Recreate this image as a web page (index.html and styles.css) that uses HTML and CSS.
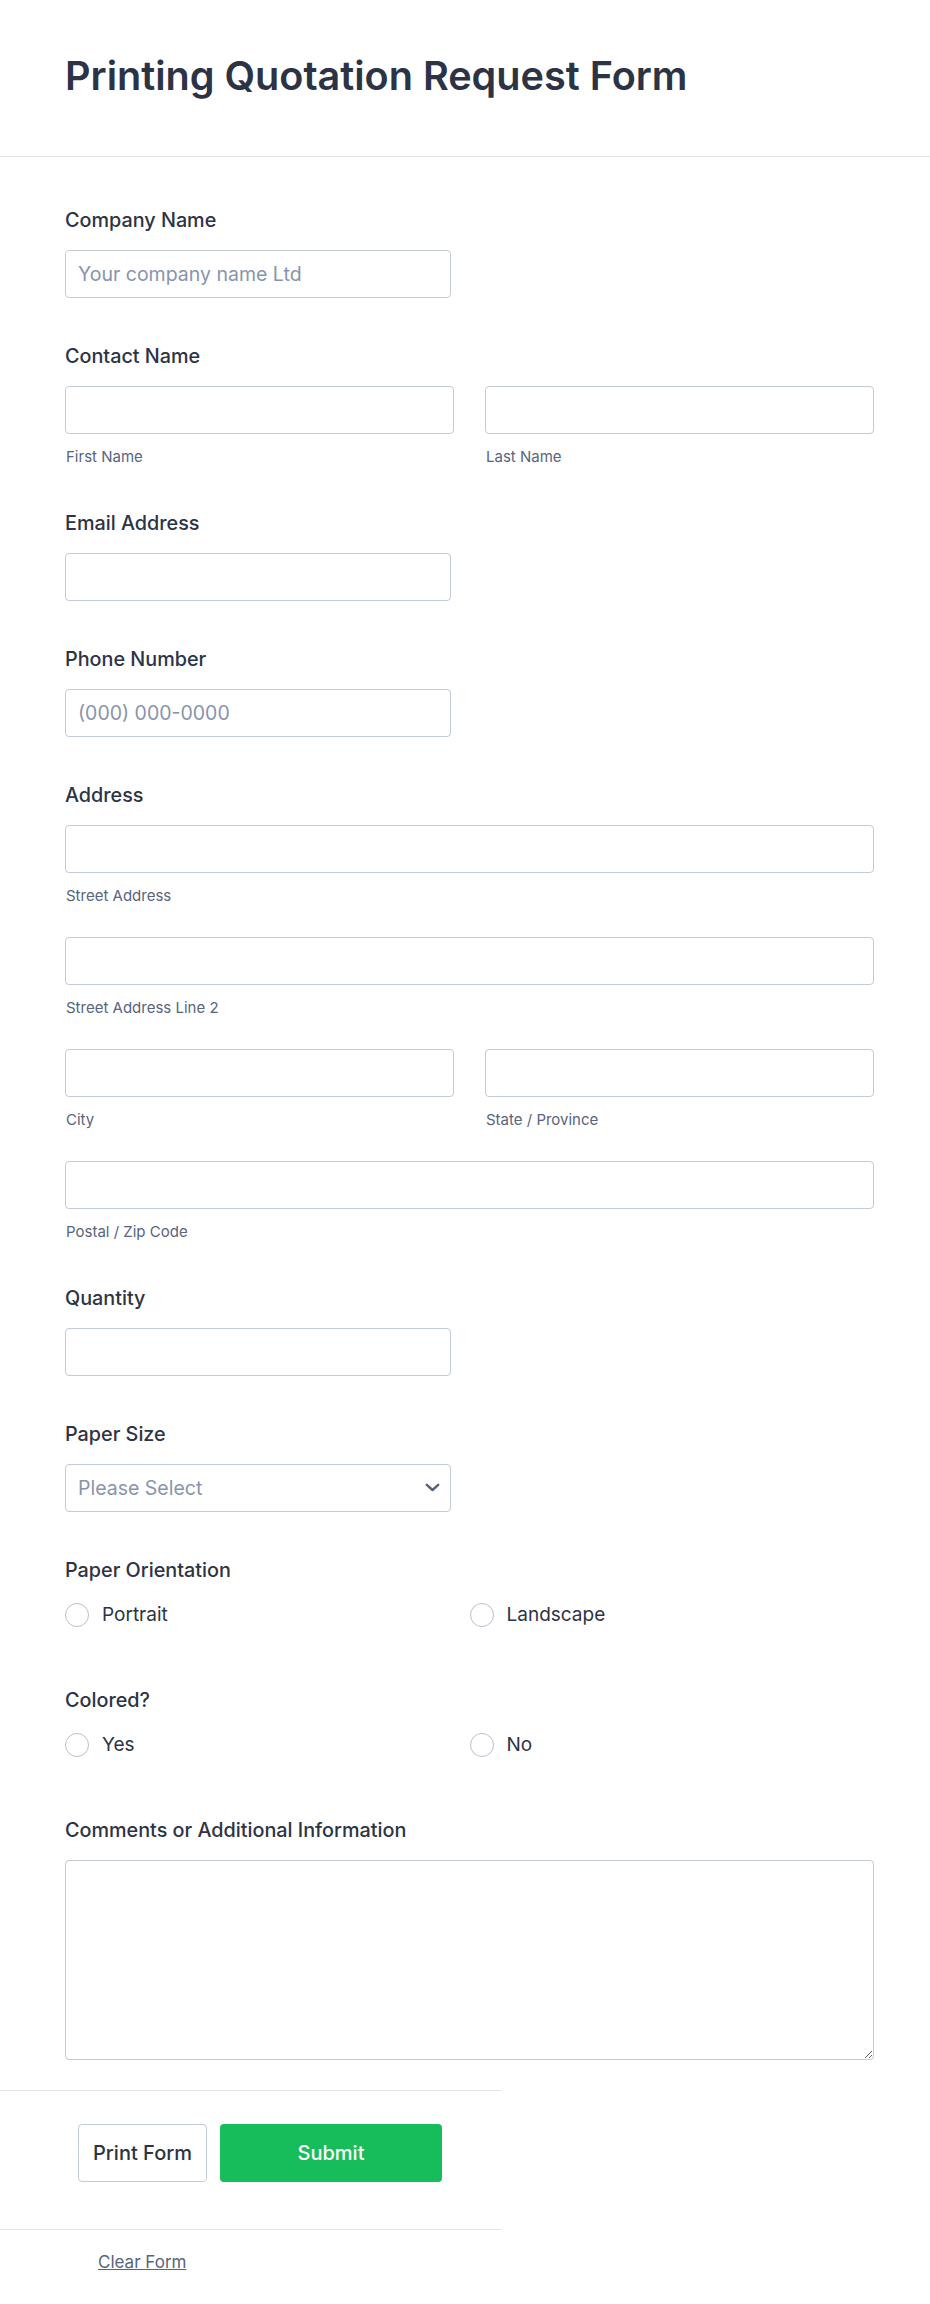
FILE: index.html
```html
<!DOCTYPE html>
<html lang="en">
<head>
<meta charset="utf-8">
<title>Printing Quotation Request Form</title>
<link rel="stylesheet" href="styles.css">
</head>
<body>
<header class="form-header">
  <h1 class="form-title">Printing Quotation Request Form</h1>
</header>

<main class="form-body">
  <div class="field">
    <label class="field-label">Company Name</label>
    <input class="text-input half" type="text" placeholder="Your company name Ltd">
  </div>

  <div class="field">
    <label class="field-label">Contact Name</label>
    <div class="two-col">
      <div class="sub-field">
        <input class="text-input" type="text">
        <span class="sublabel">First Name</span>
      </div>
      <div class="sub-field">
        <input class="text-input" type="text">
        <span class="sublabel">Last Name</span>
      </div>
    </div>
  </div>

  <div class="field">
    <label class="field-label">Email Address</label>
    <input class="text-input half" type="email">
  </div>

  <div class="field">
    <label class="field-label">Phone Number</label>
    <input class="text-input half" type="tel" placeholder="(000) 000-0000">
  </div>

  <div class="field">
    <label class="field-label">Address</label>
    <div class="address">
      <div class="sub-field">
        <input class="text-input" type="text">
        <span class="sublabel">Street Address</span>
      </div>
      <div class="sub-field">
        <input class="text-input" type="text">
        <span class="sublabel">Street Address Line 2</span>
      </div>
      <div class="two-col">
        <div class="sub-field">
          <input class="text-input" type="text">
          <span class="sublabel">City</span>
        </div>
        <div class="sub-field">
          <input class="text-input" type="text">
          <span class="sublabel">State / Province</span>
        </div>
      </div>
      <div class="sub-field">
        <input class="text-input" type="text">
        <span class="sublabel">Postal / Zip Code</span>
      </div>
    </div>
  </div>

  <div class="field">
    <label class="field-label">Quantity</label>
    <input class="text-input half" type="text">
  </div>

  <div class="field">
    <label class="field-label">Paper Size</label>
    <div class="select-wrap half">
      <select class="select-input">
        <option>Please Select</option>
      </select>
      <svg class="select-chevron" width="15" height="9" viewBox="0 0 15 9" aria-hidden="true">
        <polyline points="1.8,1.8 7.5,7 13.2,1.8" fill="none" stroke="#57647e" stroke-width="2.5" stroke-linecap="round" stroke-linejoin="round"/>
      </svg>
    </div>
  </div>

  <div class="field radio-field">
    <label class="field-label">Paper Orientation</label>
    <div class="radio-group">
      <label class="radio-item"><input class="radio" type="radio" name="orient"><span>Portrait</span></label>
      <label class="radio-item"><input class="radio" type="radio" name="orient"><span>Landscape</span></label>
    </div>
  </div>

  <div class="field radio-field">
    <label class="field-label">Colored?</label>
    <div class="radio-group">
      <label class="radio-item"><input class="radio" type="radio" name="colored"><span>Yes</span></label>
      <label class="radio-item"><input class="radio" type="radio" name="colored"><span>No</span></label>
    </div>
  </div>

  <div class="field comments-field">
    <label class="field-label">Comments or Additional Information</label>
    <textarea class="textarea"></textarea>
  </div>
</main>

<div class="button-bar">
  <button class="btn btn-print" type="button">Print Form</button>
  <button class="btn btn-submit" type="button">Submit</button>
</div>

<div class="clear-row">
  <a class="clear-link" href="#">Clear Form</a>
</div>
</body>
</html>
```

FILE: styles.css
```css
* {
  box-sizing: border-box;
}

html, body {
  margin: 0;
  padding: 0;
  background: #ffffff;
}

body {
  font-family: Inter, "Noto Sans", "Liberation Sans", sans-serif;
  color: #2c3345;
  width: 930px;
}

.form-header {
  padding: 54px 56px 58px 65px;
  border-bottom: 1px solid #dfe2ea;
}

.form-title {
  margin: 0;
  font-size: 39.6px;
  line-height: 44px;
  font-weight: 600;
  color: #2c3345;
  letter-spacing: 0;
}

.form-body {
  padding: 28px 56px 0 65px;
}

.field {
  padding: 23px 0;
}

.field-label {
  display: block;
  font-size: 19.8px;
  line-height: 24px;
  font-weight: 500;
  color: #2c3345;
  margin-bottom: 18px;
}

.text-input,
.select-input,
.textarea {
  display: block;
  width: 100%;
  height: 48px;
  border: 1px solid #c3cad8;
  border-radius: 4px;
  background: #ffffff;
  padding: 0 12px;
  font-family: Inter, "Noto Sans", "Liberation Sans", sans-serif;
  font-size: 19.5px;
  color: #2c3345;
  outline: none;
}

.text-input::placeholder {
  color: #8894ab;
}

.half {
  width: 386px;
}

.two-col {
  display: grid;
  grid-template-columns: 1fr 1fr;
  column-gap: 31px;
}

.sub-field {
  display: flex;
  flex-direction: column;
}

.sublabel {
  margin-top: 15px;
  font-size: 15px;
  line-height: 16px;
  color: #57647e;
  padding-left: 1px;
}

.address {
  display: flex;
  flex-direction: column;
  row-gap: 33px;
}

.select-wrap {
  position: relative;
}

.select-input {
  appearance: none;
  -webkit-appearance: none;
  color: #8894ab;
  cursor: pointer;
}

.select-chevron {
  position: absolute;
  right: 11px;
  top: 19px;
}

.radio-field {
  padding-bottom: 38px;
}

.radio-field .field-label {
  margin-bottom: 20px;
}

.radio-group {
  display: grid;
  grid-template-columns: 1fr 1fr;
}

.radio-item {
  display: flex;
  align-items: center;
  gap: 13px;
  font-size: 19px;
  line-height: 25px;
  color: #2c3345;
}

.radio {
  appearance: none;
  -webkit-appearance: none;
  margin: 0;
  width: 24px;
  height: 24px;
  border: 1px solid #b9bfcc;
  border-radius: 50%;
  background: #ffffff;
  flex: none;
}

.comments-field {
  padding-bottom: 30px;
}

.textarea {
  height: 200px;
  padding: 10px 12px;
  resize: both;
}

.button-bar {
  width: 501px;
  border-top: 1px solid #e3e6ee;
  border-bottom: 1px solid #e3e6ee;
  padding: 33px 0 47px 78px;
  display: flex;
  gap: 13px;
}

.btn {
  height: 58px;
  border-radius: 4px;
  font-family: Inter, "Noto Sans", "Liberation Sans", sans-serif;
  font-size: 20px;
  font-weight: 500;
  cursor: pointer;
}

.btn-print {
  width: 129px;
  background: #ffffff;
  border: 1px solid #c3cad8;
  color: #2c3345;
}

.btn-submit {
  width: 222px;
  background: #18bd5b;
  border: none;
  color: #ffffff;
}

.clear-row {
  padding: 20px 0 0 98px;
}

.clear-link {
  font-size: 17px;
  line-height: 24px;
  color: #57647e;
  text-decoration: underline;
}
```
